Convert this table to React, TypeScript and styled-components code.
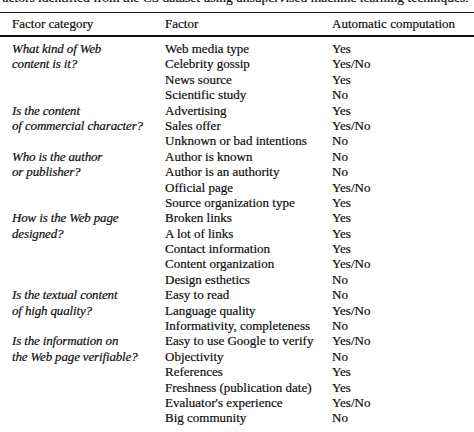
import React from "react";
import styled, { createGlobalStyle } from "styled-components";

const Global = createGlobalStyle`
  html, body { margin: 0; padding: 0; background: #fff; }
  body { width: 474px; height: 432px; overflow: hidden; }
`;

const Page = styled.div`
  width: 474px;
  font-family: "Liberation Serif", "DejaVu Serif", serif;
  color: #0d0d0d;
  -webkit-text-stroke: 0.2px #0d0d0d;
`;

const Caption = styled.div`
  height: 12px;
  overflow: hidden;
  white-space: nowrap;
  font-size: 13.5px;
  line-height: 15px;
`;

const CaptionText = styled.div`
  margin-top: -10px;
  margin-left: -5px;
`;

const Table = styled.div`
  border-top: 1px solid #222;
`;

const Row = styled.div<{ $head?: boolean }>`
  display: grid;
  grid-template-columns: 153px 167px 1fr;
  padding-left: 12px;
  height: ${(p) => (p.$head ? "22px" : "15.4px")};
  align-items: center;
  font-size: 13px;
  white-space: nowrap;
  ${(p) => (p.$head ? "border-bottom: 2px solid #111;" : "")}
`;

const Body = styled.div`
  padding-top: 4px;
`;

const Category = styled.span`
  font-style: italic;
  letter-spacing: -0.15px;
`;

type R = [string, string, string];

const groups: { cat: [string, string]; rows: [string, string][] }[] = [
  {
    cat: ["What kind of Web", "content is it?"],
    rows: [
      ["Web media type", "Yes"],
      ["Celebrity gossip", "Yes/No"],
      ["News source", "Yes"],
      ["Scientific study", "No"],
    ],
  },
  {
    cat: ["Is the content", "of commercial character?"],
    rows: [
      ["Advertising", "Yes"],
      ["Sales offer", "Yes/No"],
      ["Unknown or bad intentions", "No"],
    ],
  },
  {
    cat: ["Who is the author", "or publisher?"],
    rows: [
      ["Author is known", "No"],
      ["Author is an authority", "No"],
      ["Official page", "Yes/No"],
      ["Source organization type", "Yes"],
    ],
  },
  {
    cat: ["How is the Web page", "designed?"],
    rows: [
      ["Broken links", "Yes"],
      ["A lot of links", "Yes"],
      ["Contact information", "Yes"],
      ["Content organization", "Yes/No"],
      ["Design esthetics", "No"],
    ],
  },
  {
    cat: ["Is the textual content", "of high quality?"],
    rows: [
      ["Easy to read", "No"],
      ["Language quality", "Yes/No"],
      ["Informativity, completeness", "No"],
    ],
  },
  {
    cat: ["Is the information on", "the Web page verifiable?"],
    rows: [
      ["Easy to use Google to verify", "Yes/No"],
      ["Objectivity", "No"],
      ["References", "Yes"],
      ["Freshness (publication date)", "Yes"],
      ["Evaluator's experience", "Yes/No"],
      ["Big community", "No"],
    ],
  },
];

export default function App() {
  const rows: R[] = [];
  groups.forEach((g) => {
    g.rows.forEach((r, i) => {
      rows.push([g.cat[i] ?? "", r[0], r[1]]);
    });
  });
  return (
    <Page>
      <Global />
      <Caption>
        <CaptionText>
          Factors identified from the CS dataset using unsupervised machine learning techniques.
        </CaptionText>
      </Caption>
      <Table>
        <Row $head>
          <span>Factor category</span>
          <span>Factor</span>
          <span>Automatic computation</span>
        </Row>
        <Body>
          {rows.map((r, i) => (
            <Row key={i}>
              <Category>{r[0]}</Category>
              <span>{r[1]}</span>
              <span>{r[2]}</span>
            </Row>
          ))}
        </Body>
      </Table>
    </Page>
  );
}
